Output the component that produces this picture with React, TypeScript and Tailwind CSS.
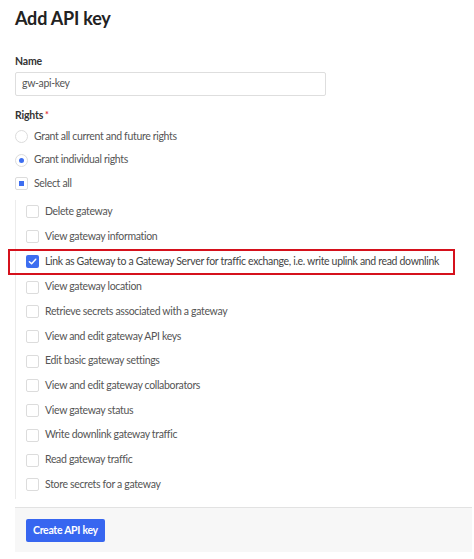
import React from 'react';

const rights = [
  { label: 'Delete gateway' },
  { label: 'View gateway information' },
  { label: 'Link as Gateway to a Gateway Server for traffic exchange, i.e. write uplink and read downlink', checked: true, highlight: true },
  { label: 'View gateway location' },
  { label: 'Retrieve secrets associated with a gateway' },
  { label: 'View and edit gateway API keys' },
  { label: 'Edit basic gateway settings' },
  { label: 'View and edit gateway collaborators' },
  { label: 'View gateway status' },
  { label: 'Write downlink gateway traffic' },
  { label: 'Read gateway traffic' },
  { label: 'Store secrets for a gateway' },
];

function Box({ checked }: { checked?: boolean }) {
  if (checked) {
    return (
      <span className="flex h-[13px] w-[13px] shrink-0 items-center justify-center rounded-[2px] bg-[#3d6ef0]">
        <svg width="9" height="9" viewBox="0 0 10 10" fill="none">
          <path d="M1.5 5.2 L4 7.6 L8.6 2.4" stroke="white" strokeWidth="1.6" strokeLinecap="round" strokeLinejoin="round" />
        </svg>
      </span>
    );
  }
  return <span className="h-[13px] w-[13px] shrink-0 rounded-[2px] border border-[#dcdcdc] bg-white" />;
}

export default function App() {
  return (
    <div className="min-h-[559px] w-[474px] bg-white text-[10.5px] tracking-[-0.33px] text-[#555] [font-family:Lato,'Noto_Sans',sans-serif]">
      <div className="px-[15px] pt-[4px]">
        <h1 className="text-[18px] font-bold leading-[28px] tracking-[-0.2px] text-[#222]">Add API key</h1>

        <div className="mt-[21px] text-[10.5px] font-bold leading-[16px] tracking-[-0.2px] text-[#333]">Name</div>
        <div className="mt-[3px] flex h-[24px] w-[311px] items-center rounded-[2px] border border-[#dedede] px-[6px] text-[#555]">
          gw-api-key
        </div>

        <div className="mt-[11px] text-[10.5px] font-bold leading-[16px] tracking-[-0.2px] text-[#333]">
          Rights<span className="ml-[2px] align-top text-[9px] text-[#e5333a]">*</span>
        </div>

        <div className="mt-[2px] flex flex-col">
          <div className="flex h-[23.5px] items-center gap-[6px]">
            <span className="h-[13px] w-[13px] shrink-0 rounded-full border border-[#dcdcdc]" />
            Grant all current and future rights
          </div>
          <div className="flex h-[23.5px] items-center gap-[6px]">
            <span className="flex h-[13px] w-[13px] shrink-0 items-center justify-center rounded-full border border-[#dcdcdc]">
              <span className="h-[5px] w-[5px] rounded-full bg-[#3d6ef0]" />
            </span>
            Grant individual rights
          </div>
          <div className="flex h-[23.5px] items-center gap-[6px]">
            <span className="flex h-[13px] w-[13px] shrink-0 items-center justify-center rounded-[2px] border border-[#dcdcdc]">
              <span className="h-[5px] w-[5px] bg-[#3d6ef0]" />
            </span>
            Select all
          </div>

          <div className="mt-[4px] flex flex-col border-l border-[#ececec] pl-[10px] pb-[2px]">
            {rights.map((r) =>
              r.highlight ? (
                <div
                  key={r.label}
                  className="-ml-[18px] flex h-[26px] w-[447px] items-center gap-[6px] border-2 border-[#d5111c] pl-[16px] text-[#444]"
                >
                  <Box checked />
                  <span className="whitespace-nowrap">{r.label}</span>
                </div>
              ) : (
                <div key={r.label} className="flex h-[24.7px] items-center gap-[6px]">
                  <Box checked={r.checked} />
                  <span className="whitespace-nowrap">{r.label}</span>
                </div>
              )
            )}
          </div>
        </div>
      </div>

      <div className="ml-[15px] mt-[8px] w-[457px] border-t border-[#e2e2e2] bg-[#f7f7f7] px-[11px] pt-[11px] pb-[10px]">
        <button className="h-[23px] rounded-[2px] bg-[#3766f0] px-[7px] text-[10.5px] font-bold tracking-[-0.3px] text-white">
          Create API key
        </button>
      </div>
    </div>
  );
}
